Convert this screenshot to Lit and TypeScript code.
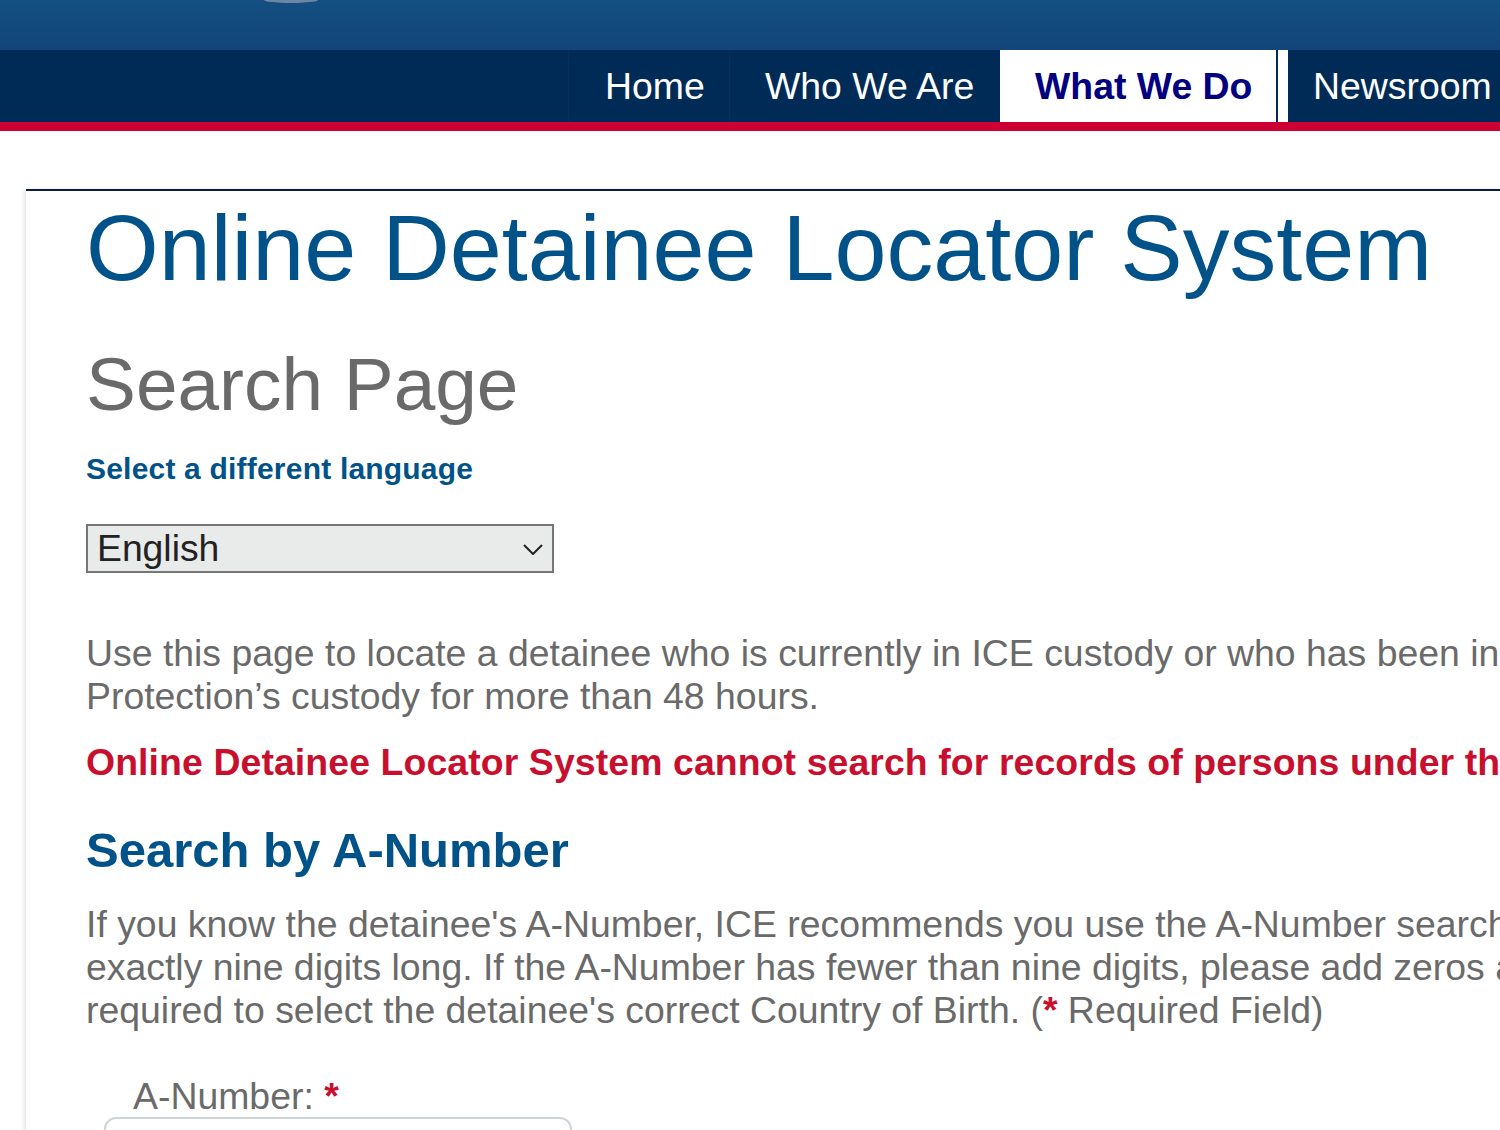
import { LitElement, html, css } from "lit";
import { customElement } from "lit/decorators.js";

@customElement("app-root")
export class AppRoot extends LitElement {
  static styles = css`
    :host {
      display: block;
      width: 1500px;
      height: 1130px;
      overflow: hidden;
      background: #fff;
      font-family: "Liberation Sans", Arial, sans-serif;
      color: #6a6a6a;
    }
    .band {
      height: 50px;
      background: linear-gradient(#134f82, #12457a);
      display: flex;
      justify-content: flex-start;
    }
    .seal {
      width: 54px;
      height: 3px;
      margin-left: 264px;
      border-radius: 0 0 27px 27px / 0 0 3px 3px;
      background: #6f86a3;
      filter: blur(0.6px);
    }
    .nav {
      height: 72px;
      background: #002b57;
      border-bottom: 9px solid #cc0033;
      display: flex;
      padding-left: 568px;
      white-space: nowrap;
    }
    .nav a {
      display: flex;
      align-items: center;
      font-size: 37.4px;
      color: #fff;
      border-left: 1px solid #05305e;
      flex: none;
    }
    .home { width: 161px; padding-left: 36px; box-sizing: border-box; }
    .who { width: 271px; padding-left: 35px; box-sizing: border-box; }
    .nav a.what {
      width: 276px;
      padding-left: 35px;
      box-sizing: border-box;
      background: #fff;
      color: #000080;
      font-weight: 700;
      border-left: 0;
    }
    .gap {
      width: 12px;
      flex: none;
      background: #fff;
      border-left: 2px solid #002b57;
      box-sizing: border-box;
    }
    .nav a.news { padding-left: 25px; border-left: 0; }
    .main {
      margin: 58px 0 0 26px;
      border-top: 2px solid #0c1c3a;
      box-shadow: -2px 0 4px 0 #e4e4e4;
      padding-left: 60px;
      height: 1000px;
      white-space: nowrap;
    }
    h1 {
      margin: 0;
      font-size: 93.5px;
      font-weight: 400;
      line-height: 114px;
      color: #005288;
    }
    h2 {
      margin: 37px 0 0;
      font-size: 74.8px;
      font-weight: 400;
      line-height: 84px;
      color: #6a6a6a;
    }
    .lang {
      margin-top: 25px;
      font-size: 30px;
      font-weight: 700;
      line-height: 36px;
      color: #005288;
      letter-spacing: 0.2px;
    }
    .select {
      margin-top: 37px;
      width: 468px;
      height: 49px;
      box-sizing: border-box;
      border: 2px solid #767676;
      background: #e9ebeb;
      display: flex;
      align-items: center;
      justify-content: space-between;
      padding: 0 8px 0 9px;
      font-size: 37.3px;
      color: #222;
    }
    .select svg { width: 22px; height: 12px; }
    .p { font-size: 37.4px; line-height: 43px; margin: 0; }
    .use { margin-top: 59px; }
    .warn {
      margin-top: 23px;
      font-size: 37.4px;
      line-height: 43px;
      font-weight: 700;
      color: #c8102e;
      letter-spacing: 0.1px;
    }
    h3 {
      margin: 36px 0 0;
      font-size: 49px;
      line-height: 60px;
      font-weight: 700;
      color: #005288;
    }
    .by { margin-top: 23px; }
    .req { color: #c8102e; font-weight: 700; }
    .label { margin: 43px 0 0 47px; font-size: 37.4px; line-height: 43px; }
    .input {
      margin: -1px 0 0 18px;
      width: 468px;
      height: 40px;
      box-sizing: border-box;
      border: 2px solid #ced4da;
      border-radius: 12px;
    }
  `;

  render() {
    return html`
      <div class="band"><div class="seal"></div></div>
      <nav class="nav">
        <a class="home">Home</a>
        <a class="who">Who We Are</a>
        <a class="what">What We Do</a>
        <div class="gap"></div>
        <a class="news">Newsroom</a>
      </nav>
      <main class="main">
        <h1>Online Detainee Locator System</h1>
        <h2>Search Page</h2>
        <div class="lang">Select a different language</div>
        <div class="select">
          <span>English</span>
          <svg viewBox="0 0 22 12"><path d="M2 2l9 9 9-9" fill="none" stroke="#222" stroke-width="2"/></svg>
        </div>
        <p class="p use">Use this page to locate a detainee who is currently in ICE custody or who has been in U.S. Customs and Border<br />Protection’s custody for more than 48 hours.</p>
        <div class="warn">Online Detainee Locator System cannot search for records of persons under the age of 18.</div>
        <h3>Search by A-Number</h3>
        <p class="p by">If you know the detainee's A-Number, ICE recommends you use the A-Number search. The A-Number must be<br />exactly nine digits long. If the A-Number has fewer than nine digits, please add zeros at the beginning. You are<br />required to select the detainee's correct Country of Birth. (<span class="req">*</span> Required Field)</p>
        <div class="label">A-Number: <span class="req">*</span></div>
        <div class="input"></div>
      </main>
    `;
  }
}
